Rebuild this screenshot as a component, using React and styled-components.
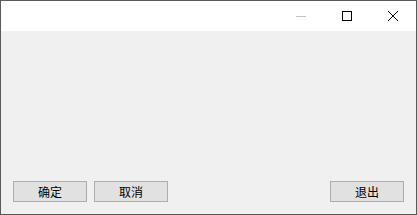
import React from 'react'
import styled, { createGlobalStyle } from 'styled-components'

const GlobalStyle = createGlobalStyle`
  html, body {
    margin: 0;
    padding: 0;
    background: #ffffff;
  }
  * {
    box-sizing: border-box;
  }
`

const Ventana = styled.div`
  width: 417px;
  height: 215px;
  border: 1px solid #5a5a5a;
  display: flex;
  flex-direction: column;
  font-family: "Noto Sans CJK SC", "Liberation Sans", sans-serif;
`

const BarraTitulo = styled.div`
  height: 30px;
  background: #ffffff;
  display: flex;
  justify-content: flex-end;
`

const BotonCaption = styled.div`
  width: 46px;
  height: 30px;
  display: flex;
  align-items: center;
  justify-content: center;
`

const Cuerpo = styled.div`
  flex: 1;
  background: #f0f0f0;
  display: flex;
  flex-direction: column;
  justify-content: flex-end;
  padding: 0 12px 12px 12px;
`

const FilaBotones = styled.div`
  display: flex;
  gap: 7px;
`

const Boton = styled.button`
  width: 74px;
  height: 21px;
  padding: 0;
  margin: 0;
  margin-left: ${p => (p.$derecha ? 'auto' : '0')};
  background: #e1e1e1;
  border: 1px solid #adadad;
  color: #000000;
  font-family: "Noto Sans CJK SC", "Liberation Sans", sans-serif;
  font-size: 12px;
  line-height: 19px;
  display: flex;
  align-items: center;
  justify-content: center;
`

export default function App() {
  return (
    <>
      <GlobalStyle />
      <Ventana>
        <BarraTitulo>
          <BotonCaption>
            <svg width="10" height="10" viewBox="0 0 10 10">
              <line x1="0" y1="5.5" x2="10" y2="5.5" stroke="#c2c2c2" strokeWidth="1" />
            </svg>
          </BotonCaption>
          <BotonCaption>
            <svg width="10" height="10" viewBox="0 0 10 10">
              <rect x="0.5" y="0.5" width="9" height="9" fill="none" stroke="#000" strokeWidth="1" />
            </svg>
          </BotonCaption>
          <BotonCaption>
            <svg width="10" height="10" viewBox="0 0 10 10">
              <path d="M0 0 L10 10 M10 0 L0 10" stroke="#000" strokeWidth="1" />
            </svg>
          </BotonCaption>
        </BarraTitulo>
        <Cuerpo>
          <FilaBotones>
            <Boton>确定</Boton>
            <Boton>取消</Boton>
            <Boton $derecha>退出</Boton>
          </FilaBotones>
        </Cuerpo>
      </Ventana>
    </>
  )
}
